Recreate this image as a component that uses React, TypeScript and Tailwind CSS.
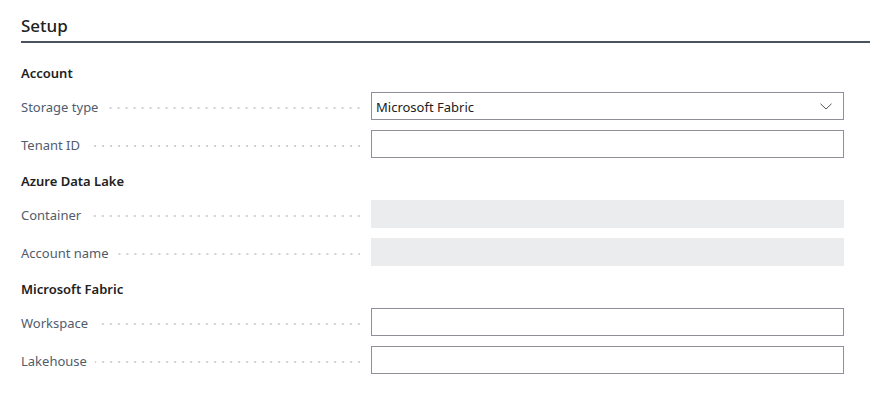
import React from "react";

const Leader = () => (
  <div className="flex-1 ml-[8px] mt-[3px] h-[2px] bg-[linear-gradient(to_left,#d2d2d2_2px,transparent_2px)] bg-[length:8px_2px] bg-repeat-x bg-[position:right]" />
);

type RowProps = { label: string; kind: "select" | "input" | "disabled"; value?: string };

const Row = ({ label, kind, value }: RowProps) => (
  <div className="flex items-center h-[28px]">
    <div className="flex items-center w-[339px] shrink-0">
      <span className="text-[13px] leading-[20px] text-[#505c6d] whitespace-nowrap translate-y-[1px]">{label}</span>
      <Leader />
    </div>
    <div className="ml-[11px] w-[473px] h-[28px] shrink-0">
      {kind === "disabled" ? (
        <div className="w-full h-full bg-[#ebecee]" />
      ) : (
        <div className="w-full h-full border border-[#8e8f98] bg-white flex items-center px-[4px]">
          {value && <span className="text-[13px] text-[#212121] leading-[20px] translate-y-[1px]">{value}</span>}
          {kind === "select" && (
            <svg className="ml-auto mr-[7px]" width="12" height="7" viewBox="0 0 12 7" fill="none">
              <path d="M0.5 0.8 L6 6 L11.5 0.8" stroke="#555" strokeWidth="1" />
            </svg>
          )}
        </div>
      )}
    </div>
  </div>
);

const Header = ({ children }: { children: React.ReactNode }) => (
  <div className="h-[20px] flex items-center text-[13px] font-semibold text-[#212121]">
    <span className="translate-y-[1px]">{children}</span>
  </div>
);

export default function App() {
  return (
    <div className="w-[870px] h-[394px] bg-white pl-[21px] pt-[14px] font-['Segoe_UI','Noto_Sans',sans-serif]">
      <div className="text-[17px] leading-[24px] text-[#212121] font-medium">Setup</div>
      <div className="mt-[3px] h-[2px] bg-[#4b5361]" />
      <div className="mt-[20px] flex flex-col">
        <Header>Account</Header>
        <div className="mt-[9px] flex flex-col gap-[10px]">
          <Row label="Storage type" kind="select" value="Microsoft Fabric" />
          <Row label="Tenant ID" kind="input" />
        </div>
        <div className="mt-[13px]">
          <Header>Azure Data Lake</Header>
        </div>
        <div className="mt-[9px] flex flex-col gap-[10px]">
          <Row label="Container" kind="disabled" />
          <Row label="Account name" kind="disabled" />
        </div>
        <div className="mt-[13px]">
          <Header>Microsoft Fabric</Header>
        </div>
        <div className="mt-[9px] flex flex-col gap-[10px]">
          <Row label="Workspace" kind="input" />
          <Row label="Lakehouse" kind="input" />
        </div>
      </div>
    </div>
  );
}
